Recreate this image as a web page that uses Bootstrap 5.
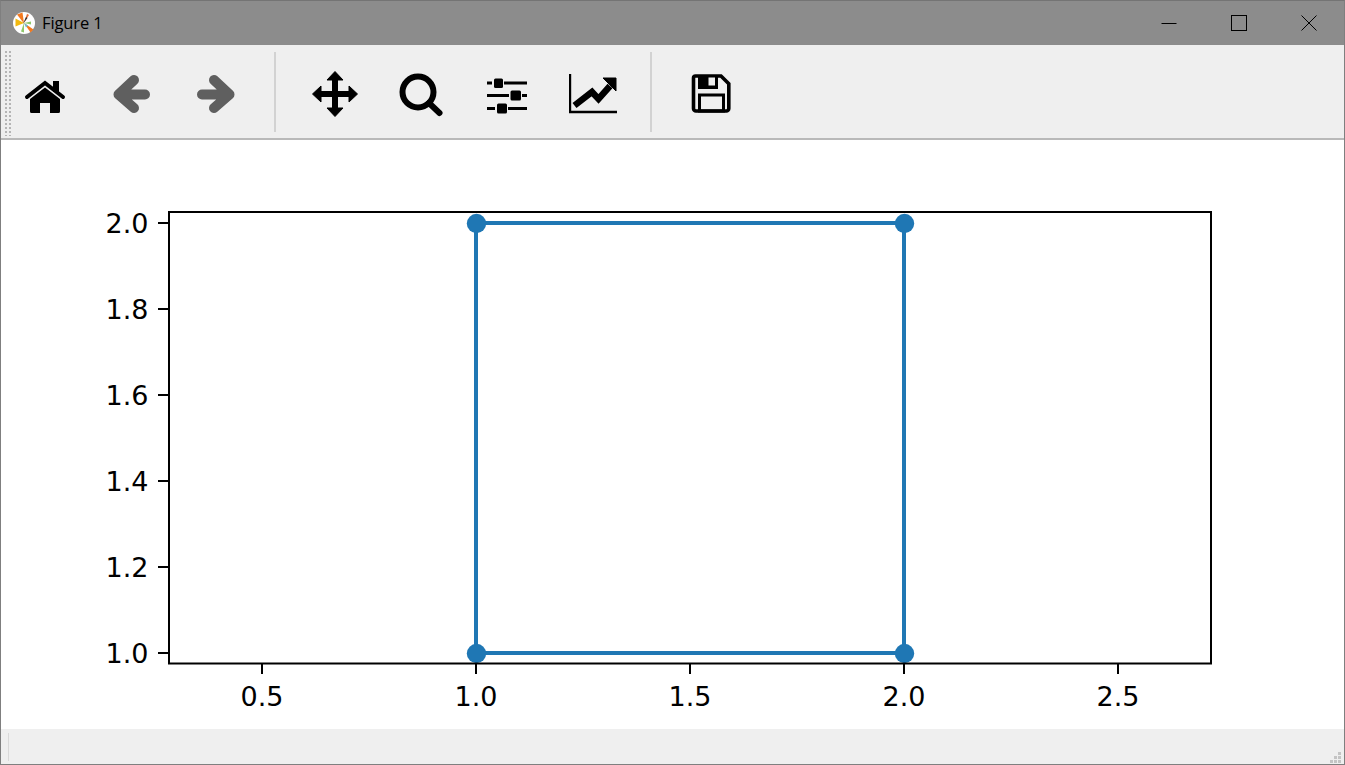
<!DOCTYPE html>
<html lang="en">
<head>
  <meta charset="UTF-8">
  <title>Figure 1</title>
  <link href="https://cdn.jsdelivr.net/npm/bootstrap@5.3.0/dist/css/bootstrap.min.css" rel="stylesheet">
  <style>
    body {
      background: #fff;
      overflow: hidden;
    }

    .fig-window {
      height: 765px;
      border: 1px solid #7f7f7f;
      border-top-color: #747474;
      font-family: "Open Sans", "Liberation Sans", sans-serif;
    }

    .fig-titlebar {
      height: 44px;
      background: #8c8c8c;
      color: #000;
      font-size: 16.5px;
      letter-spacing: -0.1px;
    }

    .fig-logo {
      margin-left: 12px;
      margin-right: 7px;
    }

    .win-btn {
      width: 70px;
      height: 44px;
    }

    .fig-toolbar {
      height: 95px;
      background: #efefef;
      border-bottom: 2px solid #b9b9b9;
      padding-top: 7px;
    }

    .tool-grip {
      width: 8px;
      height: 86px;
      margin-left: 3px;
      margin-top: -2px;
      margin-right: 9px;
      background-image: radial-gradient(#b5b5b5 0.8px, transparent 1px);
      background-size: 4px 4px;
    }

    .tool-group {
      gap: 38px;
      margin-top: 18px;
    }

    .tool-btn {
      width: 48px;
      height: 48px;
    }

    .tool-sep {
      width: 2px;
      height: 80px;
      background: #d2d2d2;
      margin: 0 35px 0 33px;
    }

    .fig-canvas {
      height: 589px;
      background: #fff;
    }

    .fig-canvas svg text {
      font-family: "DejaVu Sans", sans-serif;
      font-size: 27px;
      fill: #000;
    }

    .fig-status {
      height: 35px;
      background: #efefef;
    }

    .status-line {
      width: 1px;
      height: 28px;
      margin: 4px 0 0 7px;
      background: #d9d9d9;
    }

    .status-grip {
      margin: 0 3px 1px 0;
    }
  </style>
</head>
<body class="m-0">
  <div class="fig-window d-flex flex-column">

    <!-- title bar -->
    <div class="fig-titlebar d-flex align-items-center flex-shrink-0">
      <svg class="fig-logo" width="22" height="22" viewBox="0 0 22 22">
        <circle cx="11" cy="11" r="11" fill="#fff"/>
        <path d="M11 11.500 L4 2.500 L9.500 0.500Z" fill="#f47a1f"/>
        <path d="M11 11 L20.500 17.500 L17.500 20.500Z" fill="#f47a1f"/>
        <path d="M11 11 L2.500 6.500 L2.500 14.500Z" fill="#f2b90f"/>
        <path d="M11 11 L16 3 L14 1.800Z" fill="#e8743b"/>
        <path d="M11 11 L8 19.500 L11 20.500Z" fill="#8fc86a"/>
        <path d="M11 11 L18 9.500 L18 12.500Z" fill="#8fc86a"/>
        <path d="M11 11 L13 15.500 L15 13.500Z" fill="#6fb8c9"/>
        <path d="M10.200 11.500 L13 5 L14.500 6Z" fill="#333"/>
      </svg>
      <span>Figure 1</span>
      <div class="d-flex ms-auto">
        <div class="win-btn d-flex align-items-center justify-content-center">
          <svg width="16" height="16" viewBox="0 0 16 16"><path d="M0.5 8.5H15.5" stroke="#000" fill="none"/></svg>
        </div>
        <div class="win-btn d-flex align-items-center justify-content-center">
          <svg width="16" height="16" viewBox="0 0 16 16"><rect x="0.5" y="0.5" width="15" height="15" stroke="#000" fill="none"/></svg>
        </div>
        <div class="win-btn d-flex align-items-center justify-content-center">
          <svg width="16" height="16" viewBox="0 0 16 16"><path d="M0.5 0.5L15.5 15.5M15.5 0.5L0.5 15.5" stroke="#000" fill="none"/></svg>
        </div>
      </div>
    </div>

    <!-- toolbar -->
    <div class="fig-toolbar d-flex align-items-start flex-shrink-0">
      <div class="tool-grip"></div>

      <div class="tool-group d-flex">
        <svg class="tool-btn" viewBox="0 0 48 48">
          <path d="M6 27L24 13L42 27" stroke="#000" stroke-width="4" stroke-linecap="round" stroke-linejoin="miter" fill="none"/>
          <rect x="32" y="11" width="6" height="11"/>
          <path d="M24 17.5L39 29V41.5a1.5 1.5 0 0 1-1.5 1.500H29V33H19V43H10.5A1.5 1.5 0 0 1 9 41.5V29Z"/>
        </svg>
        <svg class="tool-btn" viewBox="0 0 48 48">
          <path d="M27 10L11.500 24.500L27 38M11.500 24.500H38" stroke="#5f5f5f" stroke-width="10" stroke-linecap="round" stroke-linejoin="round" fill="none"/>
        </svg>
        <svg class="tool-btn" viewBox="0 0 48 48">
          <path d="M21 10L36.500 24.500L21 38M36.500 24.500H9" stroke="#5f5f5f" stroke-width="10" stroke-linecap="round" stroke-linejoin="round" fill="none"/>
        </svg>
      </div>

      <div class="tool-sep"></div>

      <div class="tool-group d-flex">
        <svg class="tool-btn" viewBox="0 0 48 48">
          <path d="M24 6V42M6 24H42" stroke="#000" stroke-width="6" fill="none"/>
          <path d="M24 1.500L32 10H16ZM24 46.500L32 38H16ZM1.500 24L10 16V32ZM46.500 24L38 16V32Z" stroke="#000" stroke-width="1" stroke-linejoin="round"/>
        </svg>
        <svg class="tool-btn" viewBox="0 0 48 48">
          <circle cx="21" cy="22" r="15.500" stroke="#000" stroke-width="6" fill="none"/>
          <path d="M32 33L42.500 43" stroke="#000" stroke-width="6" stroke-linecap="round"/>
        </svg>
        <svg class="tool-btn" viewBox="0 0 48 48">
          <path d="M4 13H9M21 13H44M4 25.500H26M39 25.500H44M4 38.500H12M25 38.500H44" stroke="#000" stroke-width="3.200" fill="none"/>
          <rect x="11" y="8.500" width="9" height="9.500" rx="1.500"/>
          <rect x="27.500" y="20.500" width="10.500" height="10" rx="1.500"/>
          <rect x="14" y="33.500" width="10" height="10" rx="1.500"/>
        </svg>
        <svg class="tool-btn" viewBox="0 0 48 48">
          <path d="M1 4V42H48" stroke="#000" stroke-width="2.400" fill="none"/>
          <path d="M5.500 35.500L23 22L29.500 29L41 16" stroke="#000" stroke-width="6.500" fill="none"/>
          <path d="M34 8H47V21Z" stroke="#000" stroke-linejoin="round"/>
        </svg>
      </div>

      <div class="tool-sep"></div>

      <div class="tool-group d-flex">
        <svg class="tool-btn" viewBox="0 0 48 48">
          <path d="M8.500 6H34L41.800 13.800V38.500A2.500 2.500 0 0 1 39.300 41H9A2.500 2.500 0 0 1 6.500 38.500V8A2 2 0 0 1 8.500 6Z" stroke="#000" stroke-width="3.600" fill="none"/>
          <rect x="11" y="6" width="20" height="13"/>
          <rect x="21.500" y="7.500" width="6.500" height="8" fill="#efefef"/>
          <rect x="12.500" y="25" width="24" height="16" stroke="#000" stroke-width="3" fill="none"/>
        </svg>
      </div>
    </div>

    <!-- plot -->
    <div class="fig-canvas flex-shrink-0">
      <svg width="1343" height="589" viewBox="1 140 1343 589">
        <path d="M476 223H904V653H476Z" stroke="#1f77b4" stroke-width="4" fill="none"/>
        <g fill="#1f77b4">
          <circle cx="476.500" cy="223.500" r="9.700"/>
          <circle cx="904.500" cy="223.500" r="9.700"/>
          <circle cx="476.500" cy="653.500" r="9.700"/>
          <circle cx="904.500" cy="653.500" r="9.700"/>
        </g>
        <rect x="169" y="212" width="1042" height="451.500" fill="none" stroke="#000" stroke-width="2"/>
        <g stroke="#000" stroke-width="2">
          <path d="M262 663V674M476 663V674M690 663V674M904 663V674M1118 663V674"/>
          <path d="M158 223H169M158 309H169M158 395H169M158 481H169M158 567H169M158 653H169"/>
        </g>
        <g text-anchor="end">
          <text x="148.500" y="233">2.0</text>
          <text x="148.500" y="319">1.8</text>
          <text x="148.500" y="405">1.6</text>
          <text x="148.500" y="491">1.4</text>
          <text x="148.500" y="577">1.2</text>
          <text x="148.500" y="663">1.0</text>
        </g>
        <g text-anchor="middle">
          <text x="262" y="706">0.5</text>
          <text x="476" y="706">1.0</text>
          <text x="690" y="706">1.5</text>
          <text x="904" y="706">2.0</text>
          <text x="1118" y="706">2.5</text>
        </g>
      </svg>
    </div>

    <!-- status bar -->
    <div class="fig-status d-flex justify-content-between flex-grow-1">
      <div class="status-line"></div>
      <svg class="status-grip align-self-end" width="11" height="11" viewBox="0 0 11 11" fill="#c4c4c4">
        <rect x="8" y="0" width="3" height="3"/>
        <rect x="4" y="4" width="3" height="3"/>
        <rect x="8" y="4" width="3" height="3"/>
        <rect x="0" y="8" width="3" height="3"/>
        <rect x="4" y="8" width="3" height="3"/>
        <rect x="8" y="8" width="3" height="3"/>
      </svg>
    </div>
  </div>
  <script src="https://cdn.jsdelivr.net/npm/bootstrap@5.3.0/dist/js/bootstrap.bundle.min.js"></script>
</body>
</html>
